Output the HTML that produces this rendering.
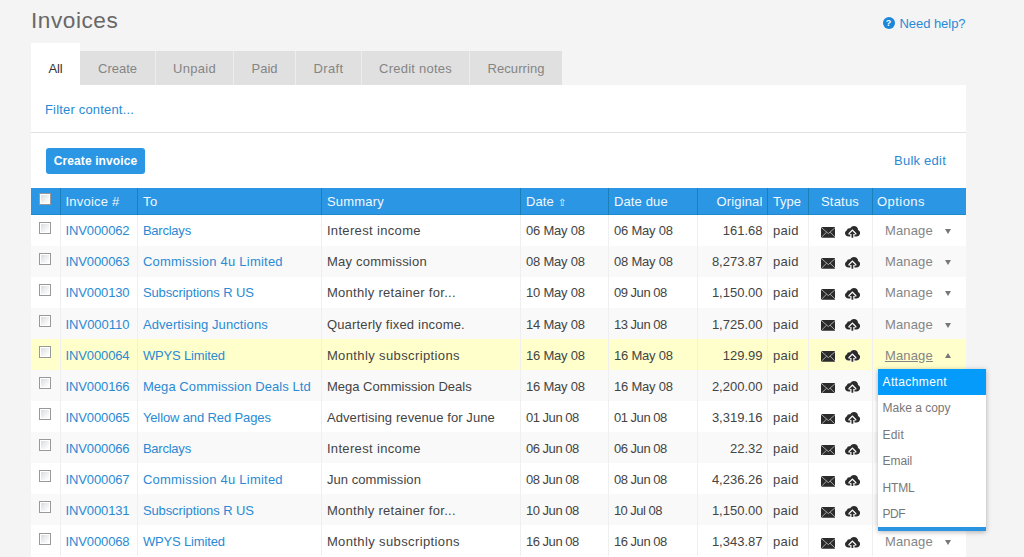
<!DOCTYPE html>
<html><head><meta charset="utf-8"><title>Invoices</title>
<style>
*{box-sizing:border-box;margin:0;padding:0}
html,body{width:1024px;height:557px;overflow:hidden}
body{background:#f4f4f4;font-family:"Liberation Sans",sans-serif;font-size:13px;color:#444;position:relative}
a{color:#2a8ad4;text-decoration:none}
h1{position:absolute;left:31px;top:5.6px;font-weight:normal;font-size:22.6px;line-height:30px;color:#686868;letter-spacing:0.55px}
.help{position:absolute;left:882.5px;top:15px;font-size:13px;line-height:17px;color:#2a8ad4;white-space:nowrap}
.help i{display:inline-block;width:12px;height:12px;border-radius:50%;background:#1c86da;color:#fff;font-style:normal;font-weight:bold;font-size:9px;line-height:12px;text-align:center;vertical-align:middle;margin-right:5px;position:relative;top:-1.5px;letter-spacing:0}
.tabs{position:absolute;left:31px;top:43px;height:42px;white-space:nowrap;font-size:0}
.tab{display:inline-block;vertical-align:bottom;height:34.5px;background:#e0e0e0;color:#858585;font-size:13px;line-height:35.5px;text-align:center;border-right:1px solid #ededed}
.tab.act{height:42px;background:#fff;color:#333;line-height:51px;border-right:none}
.panel{position:absolute;left:31px;top:85px;width:935px;height:480px;background:#fff}
.filter{position:absolute;left:14px;top:16px;line-height:17px;color:#2a8ad4}
.hr{position:absolute;left:0;top:47px;width:935px;height:1px;background:#e2e2e2}
.btn{position:absolute;left:15px;top:63px;width:99px;height:26px;border-radius:3px;background:#2a96e4;color:#fff;font-weight:bold;font-size:12px;line-height:26px;text-align:center;letter-spacing:0.12px}
.bulk{position:absolute;left:863px;top:67px;line-height:17px;color:#2a8ad4}
table{position:absolute;left:0;top:103.4px;width:935px;border-collapse:collapse;table-layout:fixed}
th{height:26.3px;background:#2a96e4;box-shadow:inset 0 -1px 0 #1f8aca;color:#f2f8fd;font-weight:normal;text-align:left;padding:0 0 1px 5.4px;border-left:1px solid #1b80ba;white-space:nowrap;overflow:hidden}
th:first-child{border-left:none}
td{height:31.07px;padding:1.25px 0 0 5.4px;border-left:1px solid #efefef;white-space:nowrap;overflow:hidden;vertical-align:middle}
td:first-child{border-left:none}
tr.even td{background:#f9f9f9}
tr.odd td{background:#fff}
tr.hl td{background:#ffffcc}
.c0{padding:0;position:relative}
.cb{display:block;width:12px;height:12px;border:1px solid #999;background:linear-gradient(135deg,#d4d8dc,#fff 85%);box-shadow:inset 0 0 0 1px #fff;position:absolute;left:8.4px;top:7.2px}
th .cb{top:4.2px}
td.c6{text-align:right;padding:1.25px 4px 0 0}
th.c6{text-align:right;padding:0 4px 1px 0}
tr>:nth-child(2){padding-left:5px}
td.c8{padding:0}
th.c8{text-align:center;padding:0 0 1px 0}
.icw{position:relative;height:31px;width:63px}
.ic{position:absolute;display:block}
.mail{left:12.1px;top:12.5px}
.cloud{left:36.5px;top:11.4px}
.c9{color:#858585}
.mw{position:relative}
.mg{margin-left:7px}
.mg.open{text-decoration:underline}
.ar{position:absolute;left:67.3px;top:6px;width:0;height:0;border-left:3px solid transparent;border-right:3px solid transparent}
.ar.dn{border-top:5px solid #777}
.ar.up{border-bottom:5px solid #777;top:5px}
.menu{position:absolute;left:878px;top:369px;width:108px;background:#fff;border-bottom:4px solid #2a94e0;box-shadow:0 1px 5px rgba(0,0,0,.3);font-size:12px;color:#777}
.menu div{height:26.38px;line-height:26.38px;padding-left:4.5px;white-space:nowrap}
.menu div.sel{background:#049bfa;color:#fff}
</style></head><body>
<h1>Invoices</h1>
<div class="help"><i>?</i><span style="letter-spacing:-0.05px">Need help?</span></div>
<div class="tabs"><span class="tab act" style="width:49px"><span style="letter-spacing:-0.15px">All</span></span><span class="tab" style="width:76px"><span style="letter-spacing:-0.01px">Create</span></span><span class="tab" style="width:78px"><span style="letter-spacing:0.3px">Unpaid</span></span><span class="tab" style="width:62px"><span style="letter-spacing:-0.01px">Paid</span></span><span class="tab" style="width:66px"><span style="letter-spacing:0.37px">Draft</span></span><span class="tab" style="width:108px"><span style="letter-spacing:0.24px">Credit notes</span></span><span class="tab" style="width:92px;border-right:none"><span style="letter-spacing:0.07px">Recurring</span></span></div>
<div class="panel">
<div class="filter"><span style="letter-spacing:0.18px">Filter content...</span></div>
<div class="hr"></div>
<div class="btn">Create invoice</div>
<div class="bulk"><span style="letter-spacing:0.24px">Bulk edit</span></div>
<table>
<colgroup><col style="width:29px"><col style="width:77px"><col style="width:184px"><col style="width:199px"><col style="width:88px"><col style="width:89px"><col style="width:70px"><col style="width:41px"><col style="width:64px"><col style="width:94px"></colgroup>
<tr><th class="c0"><span class="cb"></span></th><th><span style="letter-spacing:0.22px">Invoice #</span></th><th><span style="letter-spacing:0.63px">To</span></th><th><span style="letter-spacing:0.2px">Summary</span></th><th><span style="letter-spacing:0.13px">Date</span> <span style="font-size:10px">&#8679;</span></th><th><span style="letter-spacing:0.15px">Date due</span></th><th class="c6"><span style="letter-spacing:0.15px">Original</span></th><th><span style="letter-spacing:-0.05px">Type</span></th><th class="c8"><span style="letter-spacing:0.19px">Status</span></th><th style="padding-left:4.5px"><span style="letter-spacing:0.46px">Options</span></th></tr>
<tr class="odd"><td class="c0"><span class="cb"></span></td><td class="c1"><a style="letter-spacing:-0.12px">INV000062</a></td><td class="c2"><a style="letter-spacing:-0.23px">Barclays</a></td><td class="c3"><span style="letter-spacing:0.34px">Interest income</span></td><td class="c4"><span style="letter-spacing:-0.19px">06 May 08</span></td><td class="c5"><span style="letter-spacing:-0.19px">06 May 08</span></td><td class="c6">161.68</td><td class="c7"><span style="letter-spacing:0.36px">paid</span></td><td class="c8"><div class="icw"><svg class="ic mail" width="14.7" height="10.8" viewBox="0 0 14.7 10.8"><rect x="0" y="0" width="14.7" height="10.8" rx="1.6" fill="#2b2b2b"/><path d="M0.8 0.9 L7.35 6.6 L13.9 0.9" fill="none" stroke="#d8d8d8" stroke-width="0.7"/><path d="M0.8 9.9 L5.6 5.2 M13.9 9.9 L9.1 5.2" fill="none" stroke="#d8d8d8" stroke-width="0.7"/></svg><svg class="ic cloud" width="15.1" height="11.7" viewBox="0 0 15.1 11.7"><path d="M3.6 10.4 C1.5 10.4 0 9 0 7.2 C0 5.8 0.8 4.7 2 4.2 C2.1 3.1 3 2.3 4.1 2.3 C4.5 2.3 4.8 2.4 5.1 2.5 C5.8 1 7.2 0 8.9 0 C11.2 0 13 1.7 13.1 3.9 C14.3 4.4 15.1 5.6 15.1 6.9 C15.1 8.9 13.5 10.4 11.5 10.4 Z" fill="#2b2b2b"/><path d="M7.4 3.3 L3.4 7.3 L3.4 8.4 L5.3 8.4 L5.3 11.7 L9.5 11.7 L9.5 8.4 L11.4 8.4 L11.4 7.3 Z" fill="#fff"/><path d="M7.4 4.9 L4.5 7.9 L6.5 7.9 L6.5 11.7 L8.3 11.7 L8.3 7.9 L10.3 7.9 Z" fill="#2b2b2b"/></svg></div></td><td class="c9"><div class="mw"><span class="mg" style="letter-spacing:0.17px">Manage</span><i class="ar dn"></i></div></td></tr>
<tr class="even"><td class="c0"><span class="cb"></span></td><td class="c1"><a style="letter-spacing:-0.12px">INV000063</a></td><td class="c2"><a style="letter-spacing:0.23px">Commission 4u Limited</a></td><td class="c3"><span style="letter-spacing:0.23px">May commission</span></td><td class="c4"><span style="letter-spacing:-0.19px">08 May 08</span></td><td class="c5"><span style="letter-spacing:-0.19px">08 May 08</span></td><td class="c6">8,273.87</td><td class="c7"><span style="letter-spacing:0.36px">paid</span></td><td class="c8"><div class="icw"><svg class="ic mail" width="14.7" height="10.8" viewBox="0 0 14.7 10.8"><rect x="0" y="0" width="14.7" height="10.8" rx="1.6" fill="#2b2b2b"/><path d="M0.8 0.9 L7.35 6.6 L13.9 0.9" fill="none" stroke="#d8d8d8" stroke-width="0.7"/><path d="M0.8 9.9 L5.6 5.2 M13.9 9.9 L9.1 5.2" fill="none" stroke="#d8d8d8" stroke-width="0.7"/></svg><svg class="ic cloud" width="15.1" height="11.7" viewBox="0 0 15.1 11.7"><path d="M3.6 10.4 C1.5 10.4 0 9 0 7.2 C0 5.8 0.8 4.7 2 4.2 C2.1 3.1 3 2.3 4.1 2.3 C4.5 2.3 4.8 2.4 5.1 2.5 C5.8 1 7.2 0 8.9 0 C11.2 0 13 1.7 13.1 3.9 C14.3 4.4 15.1 5.6 15.1 6.9 C15.1 8.9 13.5 10.4 11.5 10.4 Z" fill="#2b2b2b"/><path d="M7.4 3.3 L3.4 7.3 L3.4 8.4 L5.3 8.4 L5.3 11.7 L9.5 11.7 L9.5 8.4 L11.4 8.4 L11.4 7.3 Z" fill="#fff"/><path d="M7.4 4.9 L4.5 7.9 L6.5 7.9 L6.5 11.7 L8.3 11.7 L8.3 7.9 L10.3 7.9 Z" fill="#2b2b2b"/></svg></div></td><td class="c9"><div class="mw"><span class="mg" style="letter-spacing:0.17px">Manage</span><i class="ar dn"></i></div></td></tr>
<tr class="odd"><td class="c0"><span class="cb"></span></td><td class="c1"><a style="letter-spacing:-0.12px">INV000130</a></td><td class="c2"><a style="letter-spacing:-0.1px">Subscriptions R US</a></td><td class="c3"><span style="letter-spacing:0.3px">Monthly retainer for...</span></td><td class="c4"><span style="letter-spacing:-0.19px">10 May 08</span></td><td class="c5"><span style="letter-spacing:-0.46px">09 Jun 08</span></td><td class="c6">1,150.00</td><td class="c7"><span style="letter-spacing:0.36px">paid</span></td><td class="c8"><div class="icw"><svg class="ic mail" width="14.7" height="10.8" viewBox="0 0 14.7 10.8"><rect x="0" y="0" width="14.7" height="10.8" rx="1.6" fill="#2b2b2b"/><path d="M0.8 0.9 L7.35 6.6 L13.9 0.9" fill="none" stroke="#d8d8d8" stroke-width="0.7"/><path d="M0.8 9.9 L5.6 5.2 M13.9 9.9 L9.1 5.2" fill="none" stroke="#d8d8d8" stroke-width="0.7"/></svg><svg class="ic cloud" width="15.1" height="11.7" viewBox="0 0 15.1 11.7"><path d="M3.6 10.4 C1.5 10.4 0 9 0 7.2 C0 5.8 0.8 4.7 2 4.2 C2.1 3.1 3 2.3 4.1 2.3 C4.5 2.3 4.8 2.4 5.1 2.5 C5.8 1 7.2 0 8.9 0 C11.2 0 13 1.7 13.1 3.9 C14.3 4.4 15.1 5.6 15.1 6.9 C15.1 8.9 13.5 10.4 11.5 10.4 Z" fill="#2b2b2b"/><path d="M7.4 3.3 L3.4 7.3 L3.4 8.4 L5.3 8.4 L5.3 11.7 L9.5 11.7 L9.5 8.4 L11.4 8.4 L11.4 7.3 Z" fill="#fff"/><path d="M7.4 4.9 L4.5 7.9 L6.5 7.9 L6.5 11.7 L8.3 11.7 L8.3 7.9 L10.3 7.9 Z" fill="#2b2b2b"/></svg></div></td><td class="c9"><div class="mw"><span class="mg" style="letter-spacing:0.17px">Manage</span><i class="ar dn"></i></div></td></tr>
<tr class="even"><td class="c0"><span class="cb"></span></td><td class="c1"><a style="letter-spacing:-0.01px">INV000110</a></td><td class="c2"><a style="letter-spacing:0.1px">Advertising Junctions</a></td><td class="c3"><span style="letter-spacing:0.19px">Quarterly fixed income.</span></td><td class="c4"><span style="letter-spacing:-0.19px">14 May 08</span></td><td class="c5"><span style="letter-spacing:-0.46px">13 Jun 08</span></td><td class="c6">1,725.00</td><td class="c7"><span style="letter-spacing:0.36px">paid</span></td><td class="c8"><div class="icw"><svg class="ic mail" width="14.7" height="10.8" viewBox="0 0 14.7 10.8"><rect x="0" y="0" width="14.7" height="10.8" rx="1.6" fill="#2b2b2b"/><path d="M0.8 0.9 L7.35 6.6 L13.9 0.9" fill="none" stroke="#d8d8d8" stroke-width="0.7"/><path d="M0.8 9.9 L5.6 5.2 M13.9 9.9 L9.1 5.2" fill="none" stroke="#d8d8d8" stroke-width="0.7"/></svg><svg class="ic cloud" width="15.1" height="11.7" viewBox="0 0 15.1 11.7"><path d="M3.6 10.4 C1.5 10.4 0 9 0 7.2 C0 5.8 0.8 4.7 2 4.2 C2.1 3.1 3 2.3 4.1 2.3 C4.5 2.3 4.8 2.4 5.1 2.5 C5.8 1 7.2 0 8.9 0 C11.2 0 13 1.7 13.1 3.9 C14.3 4.4 15.1 5.6 15.1 6.9 C15.1 8.9 13.5 10.4 11.5 10.4 Z" fill="#2b2b2b"/><path d="M7.4 3.3 L3.4 7.3 L3.4 8.4 L5.3 8.4 L5.3 11.7 L9.5 11.7 L9.5 8.4 L11.4 8.4 L11.4 7.3 Z" fill="#fff"/><path d="M7.4 4.9 L4.5 7.9 L6.5 7.9 L6.5 11.7 L8.3 11.7 L8.3 7.9 L10.3 7.9 Z" fill="#2b2b2b"/></svg></div></td><td class="c9"><div class="mw"><span class="mg" style="letter-spacing:0.17px">Manage</span><i class="ar dn"></i></div></td></tr>
<tr class="hl"><td class="c0"><span class="cb"></span></td><td class="c1"><a style="letter-spacing:-0.12px">INV000064</a></td><td class="c2"><a style="letter-spacing:-0.15px">WPYS Limited</a></td><td class="c3"><span style="letter-spacing:0.38px">Monthly subscriptions</span></td><td class="c4"><span style="letter-spacing:-0.19px">16 May 08</span></td><td class="c5"><span style="letter-spacing:-0.19px">16 May 08</span></td><td class="c6">129.99</td><td class="c7"><span style="letter-spacing:0.36px">paid</span></td><td class="c8"><div class="icw"><svg class="ic mail" width="14.7" height="10.8" viewBox="0 0 14.7 10.8"><rect x="0" y="0" width="14.7" height="10.8" rx="1.6" fill="#2b2b2b"/><path d="M0.8 0.9 L7.35 6.6 L13.9 0.9" fill="none" stroke="#d8d8d8" stroke-width="0.7"/><path d="M0.8 9.9 L5.6 5.2 M13.9 9.9 L9.1 5.2" fill="none" stroke="#d8d8d8" stroke-width="0.7"/></svg><svg class="ic cloud" width="15.1" height="11.7" viewBox="0 0 15.1 11.7"><path d="M3.6 10.4 C1.5 10.4 0 9 0 7.2 C0 5.8 0.8 4.7 2 4.2 C2.1 3.1 3 2.3 4.1 2.3 C4.5 2.3 4.8 2.4 5.1 2.5 C5.8 1 7.2 0 8.9 0 C11.2 0 13 1.7 13.1 3.9 C14.3 4.4 15.1 5.6 15.1 6.9 C15.1 8.9 13.5 10.4 11.5 10.4 Z" fill="#2b2b2b"/><path d="M7.4 3.3 L3.4 7.3 L3.4 8.4 L5.3 8.4 L5.3 11.7 L9.5 11.7 L9.5 8.4 L11.4 8.4 L11.4 7.3 Z" fill="#fff"/><path d="M7.4 4.9 L4.5 7.9 L6.5 7.9 L6.5 11.7 L8.3 11.7 L8.3 7.9 L10.3 7.9 Z" fill="#2b2b2b"/></svg></div></td><td class="c9"><div class="mw"><span class="mg open" style="letter-spacing:0.17px">Manage</span><i class="ar up"></i></div></td></tr>
<tr class="even"><td class="c0"><span class="cb"></span></td><td class="c1"><a style="letter-spacing:-0.12px">INV000166</a></td><td class="c2"><a style="letter-spacing:0.07px">Mega Commission Deals Ltd</a></td><td class="c3"><span style="letter-spacing:0.02px">Mega Commission Deals</span></td><td class="c4"><span style="letter-spacing:-0.19px">16 May 08</span></td><td class="c5"><span style="letter-spacing:-0.19px">16 May 08</span></td><td class="c6">2,200.00</td><td class="c7"><span style="letter-spacing:0.36px">paid</span></td><td class="c8"><div class="icw"><svg class="ic mail" width="14.7" height="10.8" viewBox="0 0 14.7 10.8"><rect x="0" y="0" width="14.7" height="10.8" rx="1.6" fill="#2b2b2b"/><path d="M0.8 0.9 L7.35 6.6 L13.9 0.9" fill="none" stroke="#d8d8d8" stroke-width="0.7"/><path d="M0.8 9.9 L5.6 5.2 M13.9 9.9 L9.1 5.2" fill="none" stroke="#d8d8d8" stroke-width="0.7"/></svg><svg class="ic cloud" width="15.1" height="11.7" viewBox="0 0 15.1 11.7"><path d="M3.6 10.4 C1.5 10.4 0 9 0 7.2 C0 5.8 0.8 4.7 2 4.2 C2.1 3.1 3 2.3 4.1 2.3 C4.5 2.3 4.8 2.4 5.1 2.5 C5.8 1 7.2 0 8.9 0 C11.2 0 13 1.7 13.1 3.9 C14.3 4.4 15.1 5.6 15.1 6.9 C15.1 8.9 13.5 10.4 11.5 10.4 Z" fill="#2b2b2b"/><path d="M7.4 3.3 L3.4 7.3 L3.4 8.4 L5.3 8.4 L5.3 11.7 L9.5 11.7 L9.5 8.4 L11.4 8.4 L11.4 7.3 Z" fill="#fff"/><path d="M7.4 4.9 L4.5 7.9 L6.5 7.9 L6.5 11.7 L8.3 11.7 L8.3 7.9 L10.3 7.9 Z" fill="#2b2b2b"/></svg></div></td><td class="c9"><div class="mw"><span class="mg" style="letter-spacing:0.17px">Manage</span><i class="ar dn"></i></div></td></tr>
<tr class="odd"><td class="c0"><span class="cb"></span></td><td class="c1"><a style="letter-spacing:-0.12px">INV000065</a></td><td class="c2"><a style="letter-spacing:-0.12px">Yellow and Red Pages</a></td><td class="c3"><span style="letter-spacing:0.09px">Advertising revenue for June</span></td><td class="c4"><span style="letter-spacing:-0.46px">01 Jun 08</span></td><td class="c5"><span style="letter-spacing:-0.46px">01 Jun 08</span></td><td class="c6">3,319.16</td><td class="c7"><span style="letter-spacing:0.36px">paid</span></td><td class="c8"><div class="icw"><svg class="ic mail" width="14.7" height="10.8" viewBox="0 0 14.7 10.8"><rect x="0" y="0" width="14.7" height="10.8" rx="1.6" fill="#2b2b2b"/><path d="M0.8 0.9 L7.35 6.6 L13.9 0.9" fill="none" stroke="#d8d8d8" stroke-width="0.7"/><path d="M0.8 9.9 L5.6 5.2 M13.9 9.9 L9.1 5.2" fill="none" stroke="#d8d8d8" stroke-width="0.7"/></svg><svg class="ic cloud" width="15.1" height="11.7" viewBox="0 0 15.1 11.7"><path d="M3.6 10.4 C1.5 10.4 0 9 0 7.2 C0 5.8 0.8 4.7 2 4.2 C2.1 3.1 3 2.3 4.1 2.3 C4.5 2.3 4.8 2.4 5.1 2.5 C5.8 1 7.2 0 8.9 0 C11.2 0 13 1.7 13.1 3.9 C14.3 4.4 15.1 5.6 15.1 6.9 C15.1 8.9 13.5 10.4 11.5 10.4 Z" fill="#2b2b2b"/><path d="M7.4 3.3 L3.4 7.3 L3.4 8.4 L5.3 8.4 L5.3 11.7 L9.5 11.7 L9.5 8.4 L11.4 8.4 L11.4 7.3 Z" fill="#fff"/><path d="M7.4 4.9 L4.5 7.9 L6.5 7.9 L6.5 11.7 L8.3 11.7 L8.3 7.9 L10.3 7.9 Z" fill="#2b2b2b"/></svg></div></td><td class="c9"><div class="mw"><span class="mg" style="letter-spacing:0.17px">Manage</span><i class="ar dn"></i></div></td></tr>
<tr class="even"><td class="c0"><span class="cb"></span></td><td class="c1"><a style="letter-spacing:-0.12px">INV000066</a></td><td class="c2"><a style="letter-spacing:-0.23px">Barclays</a></td><td class="c3"><span style="letter-spacing:0.34px">Interest income</span></td><td class="c4"><span style="letter-spacing:-0.46px">06 Jun 08</span></td><td class="c5"><span style="letter-spacing:-0.46px">06 Jun 08</span></td><td class="c6">22.32</td><td class="c7"><span style="letter-spacing:0.36px">paid</span></td><td class="c8"><div class="icw"><svg class="ic mail" width="14.7" height="10.8" viewBox="0 0 14.7 10.8"><rect x="0" y="0" width="14.7" height="10.8" rx="1.6" fill="#2b2b2b"/><path d="M0.8 0.9 L7.35 6.6 L13.9 0.9" fill="none" stroke="#d8d8d8" stroke-width="0.7"/><path d="M0.8 9.9 L5.6 5.2 M13.9 9.9 L9.1 5.2" fill="none" stroke="#d8d8d8" stroke-width="0.7"/></svg><svg class="ic cloud" width="15.1" height="11.7" viewBox="0 0 15.1 11.7"><path d="M3.6 10.4 C1.5 10.4 0 9 0 7.2 C0 5.8 0.8 4.7 2 4.2 C2.1 3.1 3 2.3 4.1 2.3 C4.5 2.3 4.8 2.4 5.1 2.5 C5.8 1 7.2 0 8.9 0 C11.2 0 13 1.7 13.1 3.9 C14.3 4.4 15.1 5.6 15.1 6.9 C15.1 8.9 13.5 10.4 11.5 10.4 Z" fill="#2b2b2b"/><path d="M7.4 3.3 L3.4 7.3 L3.4 8.4 L5.3 8.4 L5.3 11.7 L9.5 11.7 L9.5 8.4 L11.4 8.4 L11.4 7.3 Z" fill="#fff"/><path d="M7.4 4.9 L4.5 7.9 L6.5 7.9 L6.5 11.7 L8.3 11.7 L8.3 7.9 L10.3 7.9 Z" fill="#2b2b2b"/></svg></div></td><td class="c9"><div class="mw"><span class="mg" style="letter-spacing:0.17px">Manage</span><i class="ar dn"></i></div></td></tr>
<tr class="odd"><td class="c0"><span class="cb"></span></td><td class="c1"><a style="letter-spacing:-0.12px">INV000067</a></td><td class="c2"><a style="letter-spacing:0.23px">Commission 4u Limited</a></td><td class="c3"><span style="letter-spacing:0.06px">Jun commission</span></td><td class="c4"><span style="letter-spacing:-0.46px">08 Jun 08</span></td><td class="c5"><span style="letter-spacing:-0.46px">08 Jun 08</span></td><td class="c6">4,236.26</td><td class="c7"><span style="letter-spacing:0.36px">paid</span></td><td class="c8"><div class="icw"><svg class="ic mail" width="14.7" height="10.8" viewBox="0 0 14.7 10.8"><rect x="0" y="0" width="14.7" height="10.8" rx="1.6" fill="#2b2b2b"/><path d="M0.8 0.9 L7.35 6.6 L13.9 0.9" fill="none" stroke="#d8d8d8" stroke-width="0.7"/><path d="M0.8 9.9 L5.6 5.2 M13.9 9.9 L9.1 5.2" fill="none" stroke="#d8d8d8" stroke-width="0.7"/></svg><svg class="ic cloud" width="15.1" height="11.7" viewBox="0 0 15.1 11.7"><path d="M3.6 10.4 C1.5 10.4 0 9 0 7.2 C0 5.8 0.8 4.7 2 4.2 C2.1 3.1 3 2.3 4.1 2.3 C4.5 2.3 4.8 2.4 5.1 2.5 C5.8 1 7.2 0 8.9 0 C11.2 0 13 1.7 13.1 3.9 C14.3 4.4 15.1 5.6 15.1 6.9 C15.1 8.9 13.5 10.4 11.5 10.4 Z" fill="#2b2b2b"/><path d="M7.4 3.3 L3.4 7.3 L3.4 8.4 L5.3 8.4 L5.3 11.7 L9.5 11.7 L9.5 8.4 L11.4 8.4 L11.4 7.3 Z" fill="#fff"/><path d="M7.4 4.9 L4.5 7.9 L6.5 7.9 L6.5 11.7 L8.3 11.7 L8.3 7.9 L10.3 7.9 Z" fill="#2b2b2b"/></svg></div></td><td class="c9"><div class="mw"><span class="mg" style="letter-spacing:0.17px">Manage</span><i class="ar dn"></i></div></td></tr>
<tr class="even"><td class="c0"><span class="cb"></span></td><td class="c1"><a style="letter-spacing:-0.12px">INV000131</a></td><td class="c2"><a style="letter-spacing:-0.1px">Subscriptions R US</a></td><td class="c3"><span style="letter-spacing:0.3px">Monthly retainer for...</span></td><td class="c4"><span style="letter-spacing:-0.46px">10 Jun 08</span></td><td class="c5"><span style="letter-spacing:-0.53px">10 Jul 08</span></td><td class="c6">1,150.00</td><td class="c7"><span style="letter-spacing:0.36px">paid</span></td><td class="c8"><div class="icw"><svg class="ic mail" width="14.7" height="10.8" viewBox="0 0 14.7 10.8"><rect x="0" y="0" width="14.7" height="10.8" rx="1.6" fill="#2b2b2b"/><path d="M0.8 0.9 L7.35 6.6 L13.9 0.9" fill="none" stroke="#d8d8d8" stroke-width="0.7"/><path d="M0.8 9.9 L5.6 5.2 M13.9 9.9 L9.1 5.2" fill="none" stroke="#d8d8d8" stroke-width="0.7"/></svg><svg class="ic cloud" width="15.1" height="11.7" viewBox="0 0 15.1 11.7"><path d="M3.6 10.4 C1.5 10.4 0 9 0 7.2 C0 5.8 0.8 4.7 2 4.2 C2.1 3.1 3 2.3 4.1 2.3 C4.5 2.3 4.8 2.4 5.1 2.5 C5.8 1 7.2 0 8.9 0 C11.2 0 13 1.7 13.1 3.9 C14.3 4.4 15.1 5.6 15.1 6.9 C15.1 8.9 13.5 10.4 11.5 10.4 Z" fill="#2b2b2b"/><path d="M7.4 3.3 L3.4 7.3 L3.4 8.4 L5.3 8.4 L5.3 11.7 L9.5 11.7 L9.5 8.4 L11.4 8.4 L11.4 7.3 Z" fill="#fff"/><path d="M7.4 4.9 L4.5 7.9 L6.5 7.9 L6.5 11.7 L8.3 11.7 L8.3 7.9 L10.3 7.9 Z" fill="#2b2b2b"/></svg></div></td><td class="c9"><div class="mw"><span class="mg" style="letter-spacing:0.17px">Manage</span><i class="ar dn"></i></div></td></tr>
<tr class="odd"><td class="c0"><span class="cb"></span></td><td class="c1"><a style="letter-spacing:-0.12px">INV000068</a></td><td class="c2"><a style="letter-spacing:-0.15px">WPYS Limited</a></td><td class="c3"><span style="letter-spacing:0.38px">Monthly subscriptions</span></td><td class="c4"><span style="letter-spacing:-0.46px">16 Jun 08</span></td><td class="c5"><span style="letter-spacing:-0.46px">16 Jun 08</span></td><td class="c6">1,343.87</td><td class="c7"><span style="letter-spacing:0.36px">paid</span></td><td class="c8"><div class="icw"><svg class="ic mail" width="14.7" height="10.8" viewBox="0 0 14.7 10.8"><rect x="0" y="0" width="14.7" height="10.8" rx="1.6" fill="#2b2b2b"/><path d="M0.8 0.9 L7.35 6.6 L13.9 0.9" fill="none" stroke="#d8d8d8" stroke-width="0.7"/><path d="M0.8 9.9 L5.6 5.2 M13.9 9.9 L9.1 5.2" fill="none" stroke="#d8d8d8" stroke-width="0.7"/></svg><svg class="ic cloud" width="15.1" height="11.7" viewBox="0 0 15.1 11.7"><path d="M3.6 10.4 C1.5 10.4 0 9 0 7.2 C0 5.8 0.8 4.7 2 4.2 C2.1 3.1 3 2.3 4.1 2.3 C4.5 2.3 4.8 2.4 5.1 2.5 C5.8 1 7.2 0 8.9 0 C11.2 0 13 1.7 13.1 3.9 C14.3 4.4 15.1 5.6 15.1 6.9 C15.1 8.9 13.5 10.4 11.5 10.4 Z" fill="#2b2b2b"/><path d="M7.4 3.3 L3.4 7.3 L3.4 8.4 L5.3 8.4 L5.3 11.7 L9.5 11.7 L9.5 8.4 L11.4 8.4 L11.4 7.3 Z" fill="#fff"/><path d="M7.4 4.9 L4.5 7.9 L6.5 7.9 L6.5 11.7 L8.3 11.7 L8.3 7.9 L10.3 7.9 Z" fill="#2b2b2b"/></svg></div></td><td class="c9"><div class="mw"><span class="mg" style="letter-spacing:0.17px">Manage</span><i class="ar dn"></i></div></td></tr>
</table>
</div>
<div class="menu"><div class="sel"><span style="letter-spacing:0.38px">Attachment</span></div><div><span style="letter-spacing:-0.0px">Make a copy</span></div><div><span style="letter-spacing:0.2px">Edit</span></div><div><span style="letter-spacing:-0.06px">Email</span></div><div><span style="letter-spacing:-0.17px">HTML</span></div><div><span style="letter-spacing:-0.47px">PDF</span></div></div>
</body></html>
